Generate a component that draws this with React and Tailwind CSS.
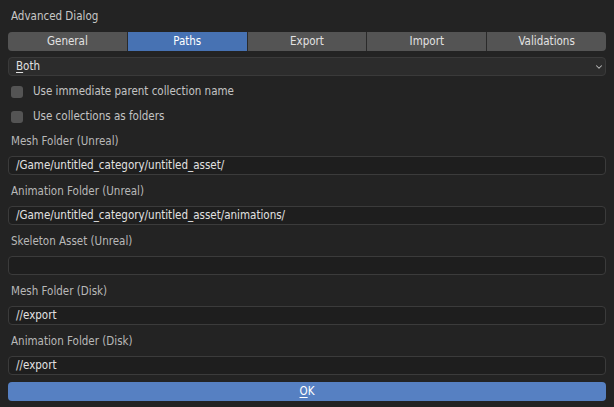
import React from 'react';
import { ChevronDown } from 'lucide-react';

const tabs = ['General', 'Paths', 'Export', 'Import', 'Validations'];

const fields = [
  { label: 'Mesh Folder (Unreal)', value: '/Game/untitled_category/untitled_asset/' },
  { label: 'Animation Folder (Unreal)', value: '/Game/untitled_category/untitled_asset/animations/' },
  { label: 'Skeleton Asset (Unreal)', value: '' },
  { label: 'Mesh Folder (Disk)', value: '//export' },
  { label: 'Animation Folder (Disk)', value: '//export' },
];

function Checkbox({ label }) {
  return (
    <div className="flex items-center h-[25px] pl-[3px]">
      <div className="w-[12px] h-[12px] rounded-[3px] bg-[#545454]" />
      <span className="ml-[10px] text-[#c4c4c4]">{label}</span>
    </div>
  );
}

function Field({ label, value }) {
  return (
    <div>
      <div className="h-[31px] flex items-center pl-[3px] pt-[3px] text-[#b8b8b8]">{label}</div>
      <div className="h-[19px] rounded-[4px] border border-[#3b3b3b] bg-[#1e1e1e] flex items-center pl-[7px] text-[#e2e2e2]">
        {value}
      </div>
    </div>
  );
}

export default function App() {
  return (
    <div
      className="w-[614px] h-[407px] bg-[#232323] text-[11.5px] overflow-hidden px-[8px]"
      style={{ fontFamily: '"DejaVu Sans Condensed", "Liberation Sans", sans-serif' }}
    >
      <div className="h-[32px] flex items-center pl-[3px] pt-[1px] text-[#c8c8c8]">Advanced Dialog</div>

      {/* tabs */}
      <div className="flex h-[19px] gap-[1px] rounded-[4px] overflow-hidden bg-[#2a2a2a]">
        {tabs.map((t) => (
          <div
            key={t}
            className={
              'flex-1 flex items-center justify-center ' +
              (t === 'Paths' ? 'bg-[#4772b3] text-white' : 'bg-[#545454] text-[#e2e2e2]')
            }
          >
            {t}
          </div>
        ))}
      </div>

      {/* dropdown */}
      <div className="mt-[6px] h-[19px] rounded-[4px] border border-[#3a3a3a] bg-[#2c2c2c] flex items-center justify-between pl-[7px] pr-[1px] text-[#e0e0e0]">
        <span>
          <span className="underline underline-offset-2">B</span>oth
        </span>
        <ChevronDown size={10} strokeWidth={2.5} className="text-[#bdbdbd]" />
      </div>

      <div className="mt-[3px]">
        <Checkbox label="Use immediate parent collection name" />
        <Checkbox label="Use collections as folders" />
      </div>

      <div className="-mt-[4px]">
        {fields.map((f) => (
          <Field key={f.label} label={f.label} value={f.value} />
        ))}
      </div>

      <div className="mt-[7px] h-[19px] rounded-[4px] bg-[#5680c2] flex items-center justify-center text-white">
        <span>
          <span className="underline underline-offset-2">O</span>K
        </span>
      </div>
    </div>
  );
}
